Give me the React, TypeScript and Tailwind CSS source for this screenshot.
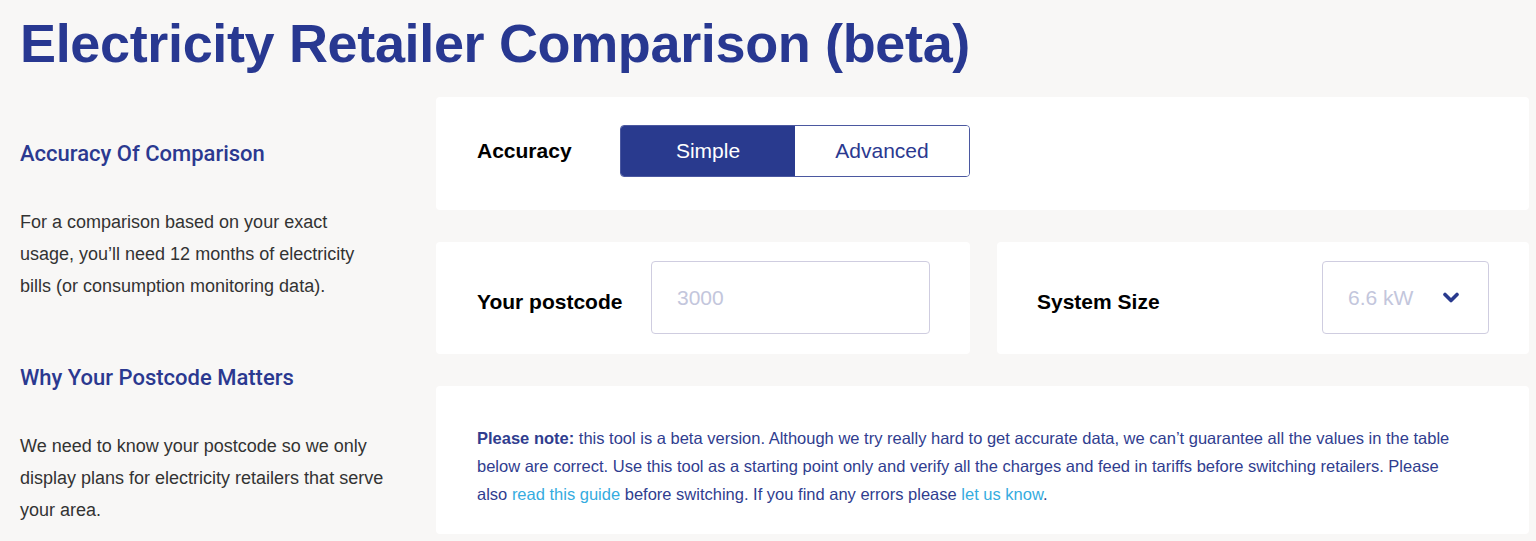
const font = { fontFamily: '"Liberation Sans", Arial, sans-serif' };

function SideSection({ title, children }: { title: string; children: React.ReactNode }) {
    return (
        <div>
            <h2 className="text-[22px] leading-7 font-[Roboto,sans-serif] font-medium text-[#2b3990]">{title}</h2>
            <p className="mt-[38px] w-[365px] text-[18px] leading-8 text-[#333333]">{children}</p>
        </div>
    );
}

function Chevron() {
    return (
        <svg width="16" height="11" viewBox="0 0 16 11" fill="none">
            <path d="M2 2.5l6 6 6-6" stroke="#293a8e" strokeWidth="3.6" strokeLinecap="round" strokeLinejoin="round" />
        </svg>
    );
}

export default function App() {
    return (
        <div style={font} className="min-h-[541px] w-[1536px] bg-[#f8f7f6] overflow-hidden">
            <h1 className="pt-4 pl-5 text-[54px] leading-none font-bold tracking-[-0.35px] text-[#283891]">
                Electricity Retailer Comparison (beta)
            </h1>
            <div className="flex mt-[27px]">
                {/* sidebar */}
                <aside className="w-[436px] shrink-0 pl-5 pt-[43px] space-y-[62px]">
                    <SideSection title="Accuracy Of Comparison">
                        For a comparison based on your exact usage, you’ll need 12 months of electricity bills (or consumption monitoring data).
                    </SideSection>
                    <SideSection title="Why Your Postcode Matters">
                        We need to know your postcode so we only display plans for electricity retailers that serve your area.
                    </SideSection>
                </aside>

                {/* main */}
                <main className="w-[1093px] space-y-8">
                    <div className="bg-white rounded h-[113px] px-[41px] pb-[5px] flex items-center">
                        <span className="text-[21px] font-bold text-black w-[143px]">Accuracy</span>
                        <div className="flex h-[52px] w-[350px] rounded border border-[#4b58a0] overflow-hidden">
                            <button className="flex-1 bg-[#293a8e] text-white text-[21px]">Simple</button>
                            <button className="flex-1 bg-white text-[#2b3990] text-[21px]">Advanced</button>
                        </div>
                    </div>

                    <div className="grid grid-cols-[534px_532px] gap-[27px]">
                        <div className="bg-white rounded h-[112px] pl-[41px] pr-10 pt-[19px] flex justify-between">
                            <span className="text-[21px] font-bold text-black leading-[73px] pt-[4px]">Your postcode</span>
                            <input
                                placeholder="3000"
                                className="w-[279px] h-[73px] rounded border border-[#cfcde0] px-[25px] text-[21px] placeholder:text-[#c3c6dc] outline-none"
                            />
                        </div>
                        <div className="bg-white rounded h-[112px] pl-10 pr-10 pt-[19px] flex justify-between">
                            <span className="text-[21px] font-bold text-black leading-[73px] pt-[4px]">System Size</span>
                            <div className="w-[167px] h-[73px] rounded border border-[#cfcde0] pl-[25px] pr-[29px] flex items-center justify-between">
                                <span className="text-[21px] text-[#c3c6dc]">6.6 kW</span>
                                <Chevron />
                            </div>
                        </div>
                    </div>

                    <div className="bg-white rounded pl-[41px] pt-[38px] pb-[26px]">
                        <p className="w-[990px] text-[16.5px] leading-7 text-[#303d8f]">
                            <b>Please note:</b> this tool is a beta version. Although we try really hard to get accurate data, we can’t guarantee all the values in the table below are correct. Use this tool as a starting point only and verify all the charges and feed in tariffs before switching retailers. Please also{' '}
                            <a className="text-[#35ace0]">read this guide</a> before switching. If you find any errors please{' '}
                            <a className="text-[#35ace0]">let us know</a>.
                        </p>
                    </div>
                </main>
            </div>
        </div>
    );
}
